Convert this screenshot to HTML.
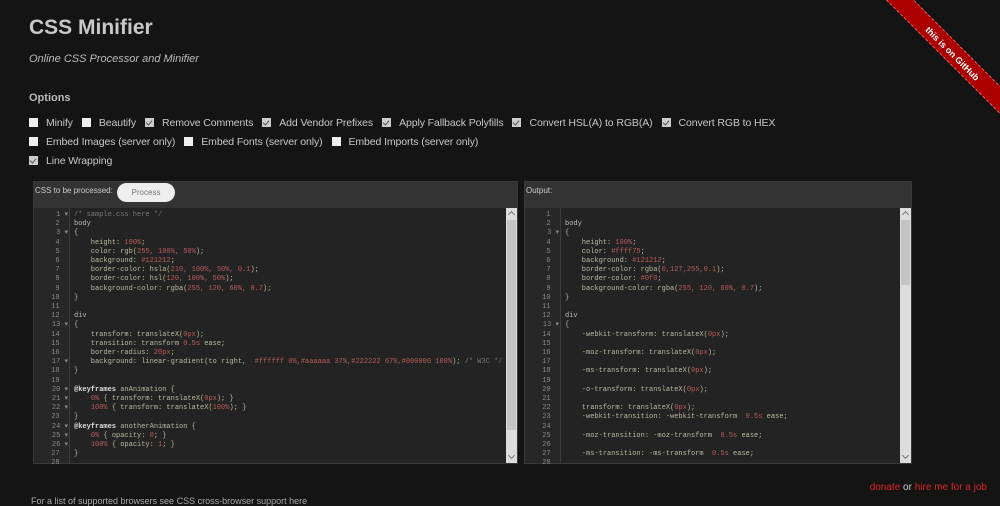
<!DOCTYPE html>
<html><head><style>
*{margin:0;padding:0;box-sizing:border-box}
body{width:1000px;height:500px;background:#141414;font-family:"Liberation Sans",sans-serif;color:#ccc;position:relative;overflow:hidden}
h1{position:absolute;left:29px;top:16px;font-size:21px;font-weight:bold;color:#c8c8c8}
.sub{position:absolute;left:29px;top:53px;font-size:11px;font-style:italic;color:#bbb}
.opt{position:absolute;left:29px;top:92px;font-size:11px;font-weight:bold;color:#bbb}
.row{position:absolute;left:29px;font-size:10.5px;color:#c8c8c8;white-space:nowrap;letter-spacing:-0.1px}
.cb{display:inline-block;width:9px;height:9px;background:#eee;vertical-align:-1px;margin-right:8px;position:relative}
.cb.c{background:#ccc}
.cb.c:after{content:"";position:absolute;left:2px;top:1px;width:3px;height:5px;border:solid #555;border-width:0 1px 1px 0;transform:rotate(40deg)}
.lbl{margin-right:9px}
.panel{position:absolute;top:181px;height:283px;background:#232323;border:1px solid #3a3a3a}
.hdr{position:absolute;left:0;right:0;top:0;height:26px;background:#333;font-size:8px;color:#ccc;padding:4px 0 0 1px}
.btn{position:absolute;left:83px;top:1px;width:58px;height:19px;border-radius:10px;background:#eee;color:#777;font-size:8px;text-align:center;line-height:19px}
.gut{position:absolute;top:26px;bottom:0;left:0;background:#272727;border-right:1px solid #3c3c3c}
.code{position:absolute;top:29px;font-family:"Liberation Mono",monospace;font-size:7px;line-height:9.2px;white-space:pre;color:#b9b9a4}
.num{position:absolute;top:29px;font-family:"Liberation Mono",monospace;font-size:7px;line-height:9.2px;white-space:pre;color:#888;text-align:right}
.r{color:#b85c5c}.cm{color:#777}.k{color:#ddd;font-weight:bold}.w{color:#bbb}
.sb{position:absolute;top:26px;bottom:0;width:11px;background:#ddd}
.sb:before{content:"";position:absolute;left:3px;top:4px;width:4px;height:4px;border-left:1px solid #777;border-top:1px solid #777;transform:rotate(45deg)}
.sb:after{content:"";position:absolute;left:3px;bottom:5px;width:4px;height:4px;border-right:1px solid #777;border-bottom:1px solid #777;transform:rotate(45deg)}
.thumb{position:absolute;left:1px;right:1px;background:#c4c4c4}
.ribbon{position:absolute;right:-38px;top:43px;width:170px;height:20px;background:#a00;transform:rotate(45deg);color:#fff;font-size:9px;font-weight:bold;text-align:center;line-height:20px;border-top:1px dashed #d66;border-bottom:1px dashed #d66}
.foot{position:absolute;right:13px;top:482px;font-size:10px;color:#ccc}
.foot span{color:#d22}
.ex{position:absolute;left:31px;top:496px;font-size:9px;color:#aaa}
</style></head><body>
<h1>CSS Minifier</h1>
<div class="sub">Online CSS Processor and Minifier</div>
<div class="opt">Options</div>
<div class="row" style="top:117px"><span class="cb"></span><span class="lbl">Minify</span><span class="cb"></span><span class="lbl">Beautify</span><span class="cb c"></span><span class="lbl">Remove Comments</span><span class="cb c"></span><span class="lbl">Add Vendor Prefixes</span><span class="cb c"></span><span class="lbl">Apply Fallback Polyfills</span><span class="cb c"></span><span class="lbl">Convert HSL(A) to RGB(A)</span><span class="cb c"></span><span class="lbl">Convert RGB to HEX</span></div>
<div class="row" style="top:136px"><span class="cb"></span><span class="lbl">Embed Images (server only)</span><span class="cb"></span><span class="lbl">Embed Fonts (server only)</span><span class="cb"></span><span class="lbl">Embed Imports (server only)</span></div>
<div class="row" style="top:155px"><span class="cb c"></span><span class="lbl">Line Wrapping</span></div>

<div class="panel" style="left:33px;width:485px">
<div class="hdr">CSS to be processed:<div class="btn">Process</div></div>
<div class="gut" style="width:36px"></div>
<div class="num" style="left:2px;width:32px">1 ▾
2  
3 ▾
4  
5  
6  
7  
8  
9  
10  
11  
12  
13 ▾
14  
15  
16  
17 ▾
18  
19  
20 ▾
21 ▾
22 ▾
23  
24 ▾
25 ▾
26 ▾
27  
28  </div>
<div class="code" style="left:40px"><span class="cm">/* sample.css here */</span>
<span class="w">body</span>
{
    height: <span class="r">100%</span>;
    color: rgb(<span class="r">255, 100%, 50%</span>);
    background: <span class="r">#121212</span>;
    border-color: hsla(<span class="r">210, 100%, 50%, 0.1</span>);
    border-color: hsl(<span class="r">120, 100%, 50%</span>);
    background-color: rgba(<span class="r">255, 120, 60%, 0.7</span>);
}

<span class="w">div</span>
{
    transform: translateX(<span class="r">0px</span>);
    transition: transform <span class="r">0.5s</span> ease;
    border-radius: <span class="r">20px</span>;
    background: linear-gradient(to right,  <span class="r">#ffffff 0%,#aaaaaa 37%,#222222 67%,#000000 100%</span>); <span class="cm">/* W3C */</span>
}

<span class="k">@keyframes</span> anAnimation {
    <span class="r">0%</span> { transform: translateX(<span class="r">0px</span>); }
    <span class="r">100%</span> { transform: translateX(<span class="r">100%</span>); }
}
<span class="k">@keyframes</span> anotherAnimation {
    <span class="r">0%</span> { opacity: <span class="r">0</span>; }
    <span class="r">100%</span> { opacity: <span class="r">1</span>; }
}
</div>
<div class="sb" style="left:472px"><div class="thumb" style="top:12px;height:210px"></div></div>
</div>

<div class="panel" style="left:524px;width:388px">
<div class="hdr">Output:</div>
<div class="gut" style="width:36px"></div>
<div class="num" style="left:2px;width:32px">1  
2  
3 ▾
4  
5  
6  
7  
8  
9  
10  
11  
12  
13 ▾
14  
15  
16  
17  
18  
19  
20  
21  
22  
23  
24  
25  
26  
27  
28  </div>
<div class="code" style="left:40px">
<span class="w">body</span>
{
    height: <span class="r">100%</span>;
    color: <span class="r">#ffff75</span>;
    background: <span class="r">#121212</span>;
    border-color: rgba(<span class="r">0,127,255,0.1</span>);
    border-color: <span class="r">#0f0</span>;
    background-color: rgba(<span class="r">255, 120, 60%, 0.7</span>);
}

<span class="w">div</span>
{
    -webkit-transform: translateX(<span class="r">0px</span>);

    -moz-transform: translateX(<span class="r">0px</span>);

    -ms-transform: translateX(<span class="r">0px</span>);

    -o-transform: translateX(<span class="r">0px</span>);

    transform: translateX(<span class="r">0px</span>);
    -webkit-transition: -webkit-transform  <span class="r">0.5s</span> ease;

    -moz-transition: -moz-transform  <span class="r">0.5s</span> ease;

    -ms-transition: -ms-transform  <span class="r">0.5s</span> ease;
</div>
<div class="sb" style="left:375px"><div class="thumb" style="top:12px;height:65px"></div></div>
</div>

<div class="ribbon">this is on GitHub</div>
<div class="foot"><span>donate</span> or <span>hire me for a job</span></div>
<div class="ex">For a list of supported browsers see CSS cross-browser support here</div>
</body></html>
